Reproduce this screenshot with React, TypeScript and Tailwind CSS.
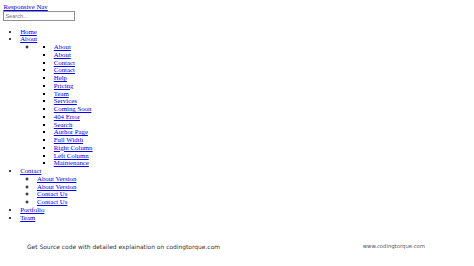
import React from 'react';

const link = 'text-[#0000EE] underline';

const aboutPages = [
  'About',
  'About',
  'Contact',
  'Contact',
  'Help',
  'Pricing',
  'Team',
  'Services',
  'Coming Soon',
  '404 Error',
  'Search',
  'Author Page',
  'Full Width',
  'Right Column',
  'Left Column',
  'Maintenance',
];

const contactPages = ['About Version', 'About Version', 'Contact Us', 'Contact Us'];

export default function App() {
  return (
    <div className="h-[266px] w-[474px] flex flex-col bg-white overflow-hidden">
      <div className="p-[3.4px] pb-0 text-[6.8px] leading-[7.75px] text-black font-['Liberation_Serif',serif]">
        {/* Brand + search */}
        <a href="#" className={link}>
          Responsive Nav
        </a>
        <div>
          <input
            type="text"
            placeholder="Search..."
            className="w-[72px] h-[10px] border border-[#8f8f8f] px-[1px] text-[5.6px] font-['Liberation_Sans',sans-serif] placeholder:text-[#777]"
          />
        </div>

        {/* Menu */}
        <ul className="list-disc pl-[16.8px] mt-[6.4px]">
          <li>
            <a href="#" className={link}>Home</a>
          </li>
          <li>
            <a href="#" className={link}>About</a>
            <ul className="list-[circle] pl-[16.8px]">
              <li>
                <ul className="list-[square] pl-[16.8px]">
                  {aboutPages.map((p, i) => (
                    <li key={i}>
                      <a href="#" className={link}>{p}</a>
                    </li>
                  ))}
                </ul>
              </li>
            </ul>
          </li>
          <li>
            <a href="#" className={link}>Contact</a>
            <ul className="list-[circle] pl-[16.8px]">
              {contactPages.map((p, i) => (
                <li key={i}>
                  <a href="#" className={link}>{p}</a>
                </li>
              ))}
            </ul>
          </li>
          <li>
            <a href="#" className={link}>Portfolio</a>
          </li>
          <li>
            <a href="#" className={link}>Team</a>
          </li>
        </ul>
      </div>

      {/* Footer */}
      <div className="mt-auto h-[38px] flex items-center justify-between pl-[27px] pr-[49px] font-['DejaVu_Sans',sans-serif]">
        <span className="text-[5.95px] text-[#333]">
          Get Source code with detailed explaination on codingtorque.com
        </span>
        <span className="text-[5.3px] text-[#555]">www.codingtorque.com</span>
      </div>
    </div>
  );
}
